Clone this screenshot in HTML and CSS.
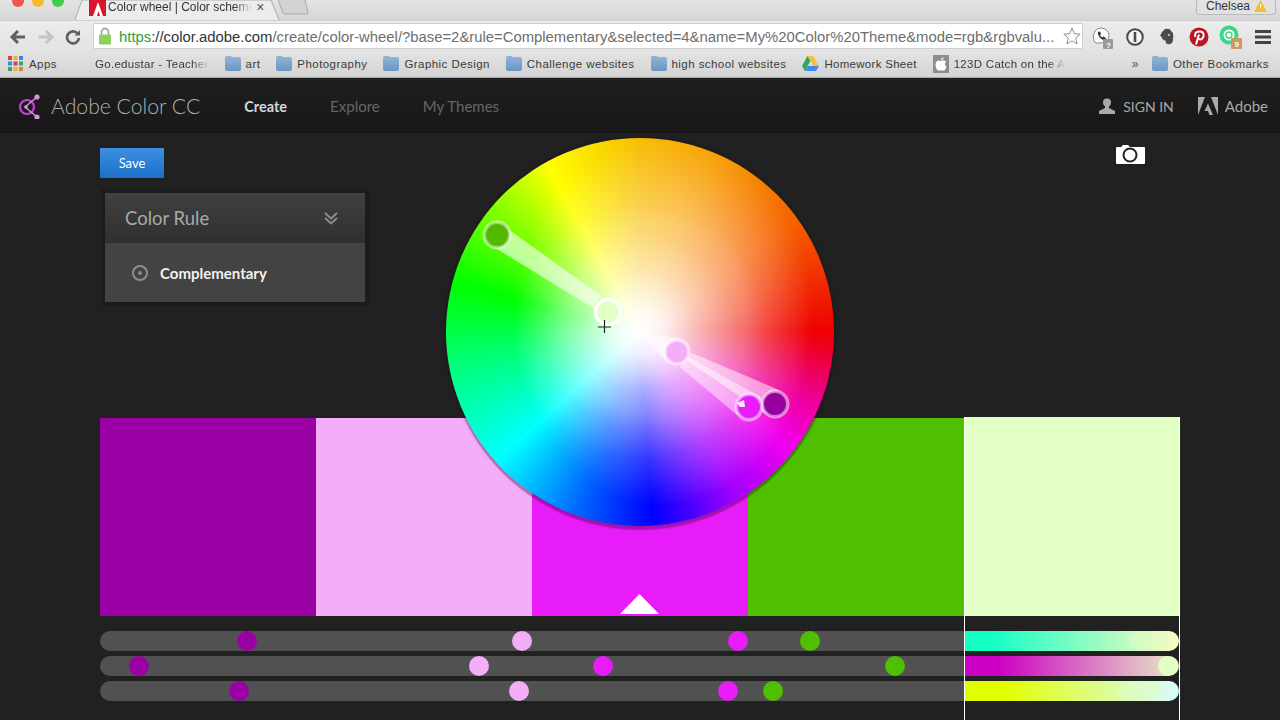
FILE: index.html
```html
<!DOCTYPE html>
<html lang="en">
<head>
<meta charset="utf-8">
<title>Color wheel | Color schemes</title>
<link rel="stylesheet" href="styles.css">
</head>
<body>
<div class="tabstrip">
  <div class="lights"><i class="light red"></i><i class="light amber"></i><i class="light green"></i></div>
  <div class="tab">
    <svg class="tab-shape" width="208" height="20" viewBox="0 0 208 20"><path d="M1 20 L8 0 H197 L205 20" fill="#ececec" stroke="#adadad"/></svg>
    <svg class="favicon" width="17" height="16" viewBox="0 0 17 16"><rect width="17" height="16" fill="#d8142a"/><path d="M4 16 L9 2 L14 16 H11 L9.500 11 L8 16Z" fill="#fff"/></svg>
    <span class="tab-title">Color wheel | Color scheme</span>
    <span class="tab-close">×</span>
  </div>
  <svg class="newtab" width="32" height="18" viewBox="0 0 32 18"><path d="M0 0 L5 13 Q5.500 14 7 14 H29 Q30.500 14 30 12 L27 0" fill="#d2d2d2" stroke="#a8a8a8"/></svg>
  <div class="user"><span>Chelsea</span><svg width="13" height="12" viewBox="0 0 13 12"><path d="M6.500 0 L13 12 H0Z" fill="#f6c02c"/><rect x="6" y="4" width="1.200" height="4" fill="#fff"/></svg></div>
</div>

<div class="toolbar">
  <svg class="tool" width="18" height="16" viewBox="0 0 18 16"><path d="M16 8 H4 M9 2 L3 8 L9 14" fill="none" stroke="#5f5f5f" stroke-width="3"/></svg>
  <svg class="tool" width="18" height="16" viewBox="0 0 18 16"><path d="M2 8 H14 M9 2 L15 8 L9 14" fill="none" stroke="#c4c4c4" stroke-width="3"/></svg>
  <svg class="tool" width="16" height="16" viewBox="0 0 16 16"><path d="M13 5 A6 6 0 1 0 14 9" fill="none" stroke="#5f5f5f" stroke-width="2.600"/><path d="M9.500 6.500 H15 V1Z" fill="#5f5f5f"/></svg>
  <div class="omnibox">
    <svg width="14" height="18" viewBox="0 0 14 18"><path d="M3.500 8 V5 A3.500 3.500 0 0 1 10.500 5 V8" fill="none" stroke="#a9a9a9" stroke-width="1.800"/><rect x="1" y="7.500" width="12" height="10" rx="1" fill="#87d35c"/></svg>
    <span class="url"><b class="scheme">https</b><span class="host">://color.adobe.com</span>/create/color-wheel/?base=2&amp;rule=Complementary&amp;selected=4&amp;name=My%20Color%20Theme&amp;mode=rgb&amp;rgbvalu...</span>
    <svg class="star" width="18" height="18" viewBox="0 0 18 18"><path d="M9 1 L11.300 6.700 L17.200 7.100 L12.700 11 L14.100 17 L9 13.800 L3.900 17 L5.300 11 L0.800 7.100 L6.700 6.700Z" fill="#fff" stroke="#8e8e8e"/></svg>
  </div>
  <div class="extensions">
    <span class="ext"><svg width="24" height="24" viewBox="0 0 24 24"><path d="M10 3 A8 7.500 0 0 1 10 18 H5 L3 16 Q1 10 4 6 Q6 3 10 3Z" fill="#fafafa" stroke="#8a8a8a"/><path d="M7 7 L9 6.500 L10 9 L9 10 Q10 12 11.500 12.500 L12.500 11.500 L15 13 L14 15 Q9 15 7 9Z" fill="#333"/><rect x="12" y="14" width="10" height="10" rx="1" fill="#9a9a9a"/><text x="15" y="22.500" class="badge-text">?</text></svg></span>
    <span class="ext"><svg width="20" height="20" viewBox="0 0 20 20"><circle cx="10" cy="10" r="7.800" fill="#f4f4f4" stroke="#4a4a4a" stroke-width="2"/><rect x="8.700" y="5" width="2.600" height="10" fill="#4a4a4a"/></svg></span>
    <span class="ext"><svg width="16" height="18" viewBox="0 0 16 18"><path d="M3 4 L6 1 Q11 0 12 3 Q15 4 14 11 Q14 17 9 16 Q6 16 7 13 Q3 12 2 8 H1Z" fill="#4b4b4b"/><circle cx="10" cy="7" r="1" fill="#ddd"/></svg></span>
    <span class="ext"><svg width="20" height="20" viewBox="0 0 20 20"><circle cx="10" cy="10" r="9.500" fill="#bb1627"/><path d="M7 17.500 L10 7.500 M6.300 10 Q5 4.500 10.500 4.500 Q15.300 4.500 14.500 9 Q13.500 13.500 9.800 12" fill="none" stroke="#fff" stroke-width="2"/></svg></span>
    <span class="ext"><svg width="26" height="26" viewBox="0 0 26 26"><circle cx="11" cy="11" r="7.500" fill="#fff" stroke="#3fd487" stroke-width="4"/><circle cx="11" cy="11" r="3" fill="#fff" stroke="#3fd487" stroke-width="1.500"/><rect x="13" y="14" width="11" height="11" rx="1" fill="#c99a63"/><text x="16.500" y="23" class="badge-text">9</text></svg></span>
    <span class="ext"><svg width="16" height="14" viewBox="0 0 16 14"><rect width="16" height="3" fill="#444"/><rect y="5.500" width="16" height="3" fill="#444"/><rect y="11" width="16" height="3" fill="#444"/></svg></span>
  </div>
</div>

<div class="bookmarks">
  <span class="bm apps"><svg width="15" height="15" viewBox="0 0 15 15"><g><rect width="4" height="4" fill="#d9453b"/><rect x="5.500" width="4" height="4" fill="#e2b33d"/><rect x="11" width="4" height="4" fill="#3f85e5"/><rect y="5.500" width="4" height="4" fill="#3f85e5"/><rect x="5.500" y="5.500" width="4" height="4" fill="#d9453b"/><rect x="11" y="5.500" width="4" height="4" fill="#3ba75b"/><rect y="11" width="4" height="4" fill="#3ba75b"/><rect x="5.500" y="11" width="4" height="4" fill="#e2b33d"/><rect x="11" y="11" width="4" height="4" fill="#d9853b"/></g></svg>Apps</span>
  <span class="bm edu"><span class="fade tight">Go.edustar - Teacher</span></span>
  <span class="bm"><i class="folder"></i>art</span>
  <span class="bm"><i class="folder"></i>Photography</span>
  <span class="bm"><i class="folder"></i>Graphic Design</span>
  <span class="bm"><i class="folder"></i>Challenge websites</span>
  <span class="bm"><i class="folder"></i>high school websites</span>
  <span class="bm"><svg width="17" height="15" viewBox="0 0 17 15"><path d="M5.500 0 H11 L17 10 H11.500Z" fill="#f4c23d"/><path d="M5.500 0 L8.300 5 L3 15 L0 10Z" fill="#2fa65a"/><path d="M3 15 L6 10 H17 L14 15Z" fill="#4585ef"/></svg><span class="tight">Homework Sheet</span></span>
  <span class="bm"><span class="apple"><svg width="12" height="14" viewBox="0 0 12 14"><path d="M8.500 0 Q8.500 3 6 3.500 Q6 1 8.500 0Z M6 4 Q8 3 10 3.800 Q11 4.500 11.200 5 Q8.500 7 11.500 10 Q10 14 8 13.700 Q6 13 4 13.700 Q1 13 0.500 8 Q0.500 3.500 4 3.500Z" fill="#fff"/></svg></span><span class="fade tight">123D Catch on the A</span></span>
  <span class="more">»</span>
  <span class="bm"><i class="folder"></i>Other Bookmarks</span>
</div>

<header class="app-header">
  <svg class="logo" width="24" height="26" viewBox="0 0 24 26"><circle cx="9" cy="14" r="7" fill="none" stroke="#c840d8" stroke-width="2.200"/><path d="M19 4 L7 14 L19 24" fill="none" stroke="#d8a0e0" stroke-width="1.300"/><circle cx="19" cy="4" r="2.600" fill="#e48cf0"/><circle cx="19" cy="24" r="2.600" fill="#e48cf0"/><circle cx="8" cy="14" r="1.800" fill="#e48cf0"/></svg>
  <span class="brand">Adobe Color CC</span>
  <nav class="nav"><a class="nav-on">Create</a><a>Explore</a><a>My Themes</a></nav>
  <div class="account">
    <svg width="16" height="16" viewBox="0 0 16 16"><circle cx="8" cy="4.500" r="4" fill="#aaa"/><path d="M6 8 H10 V10 L16 13 V16 H0 V13 L6 10Z" fill="#aaa"/></svg>
    <span class="sign">SIGN IN</span>
    <svg class="a-logo" width="20" height="18" viewBox="0 0 20 18"><path d="M0 0 H7 L0 18Z M13 0 H20 V18Z M10 6.500 L15 18 H11.500 L10 14 H6.500Z" fill="#aaa"/></svg>
    <span class="adobe">Adobe</span>
  </div>
</header>

<main class="main">
  <div class="topline">
    <button class="save">Save</button>
    <svg width="29" height="21" viewBox="0 0 29 21"><path d="M1 4 H5 L7 2 H12 L14 4 H28 Q29 4 29 5 V20 Q29 21 28 21 H1 Q0 21 0 20 V5 Q0 4 1 4Z" fill="#fff"/><circle cx="14" cy="12" r="6.500" fill="none" stroke="#222" stroke-width="2"/></svg>
  </div>

  <section class="panel">
    <div class="panel-head"><span>Color Rule</span>
      <svg width="14" height="14" viewBox="0 0 14 14"><path d="M1 2 L7 7.500 L13 2 M1 7 L7 12.500 L13 7" fill="none" stroke="#8e8e8e" stroke-width="1.800"/></svg>
    </div>
    <div class="panel-body"><i class="radio"></i><span>Complementary</span></div>
  </section>

  <div class="swatches">
    <div class="swatch s1"></div>
    <div class="swatch s2"></div>
    <div class="swatch s3"><i class="pointer"></i></div>
    <div class="swatch s4"></div>
    <div class="swatch s5"></div>
  </div>

  <div class="sliders">
    <div class="row">
      <div class="track">
        <i class="dot c1" style="left:17%"></i><i class="dot c2" style="left:48.8%"></i><i class="dot c3" style="left:73.7%"></i><i class="dot c4" style="left:82.05%"></i>
      </div>
      <div class="ramp r1"><i class="ghost" style="left:174px"></i><i class="ghost" style="left:195px"></i></div>
    </div>
    <div class="row">
      <div class="track">
        <i class="dot c1" style="left:4.5%"></i><i class="dot c2" style="left:43.85%"></i><i class="dot c3" style="left:58.1%"></i><i class="dot c4" style="left:91.85%"></i>
      </div>
      <div class="ramp r2"><i class="ghost solid" style="left:203px"></i></div>
    </div>
    <div class="row">
      <div class="track">
        <i class="dot c1" style="left:16.05%"></i><i class="dot c2" style="left:48.4%"></i><i class="dot c3" style="left:72.55%"></i><i class="dot c4" style="left:77.75%"></i>
      </div>
      <div class="ramp r3"><i class="ghost" style="left:163px"></i><i class="ghost" style="left:185px"></i></div>
    </div>
  </div>

  <div class="selected-frame"></div>

  <div class="wheel">
    <svg class="wheel-marks" width="388" height="388" viewBox="0 0 388 388">
      <path d="M51 83 L155 158 L147 170 L38 103Z" fill="#fff" fill-opacity=".6"/>
      <path d="M194 194 L235 201 L222 226Z" fill="#fff" fill-opacity=".5"/>
      <path d="M246 215 L333 252 L320 276 L240 222Z" fill="#fff" fill-opacity=".5"/>
      <path d="M240 218 L315 259 L291 277 L234 229Z" fill="#fff" fill-opacity=".45"/>
      <circle cx="51" cy="97" r="12.700" fill="#52b800" stroke="#fff" stroke-opacity=".45" stroke-width="3.500"/>
      <circle cx="329" cy="266" r="12.700" fill="#97009f" stroke="#fff" stroke-opacity=".5" stroke-width="3.500"/>
      <circle cx="303" cy="269" r="12.700" fill="#e81cf8" stroke="#fff" stroke-opacity=".5" stroke-width="3.500"/>
      <path d="M291 265 L298 262 L299 269 L294 269Z" fill="#fff" fill-opacity=".9"/>
      <circle cx="231" cy="214" r="12" fill="#f4aef9" stroke="#fff" stroke-opacity=".5" stroke-width="3.500"/>
      <circle cx="162" cy="174" r="12.500" fill="#e2ffc6" stroke="#fff" stroke-width="3.500"/>
      <path d="M158.500 182 V195 M152 189 H165" stroke="#222" stroke-width="1.200"/>
    </svg>
  </div>
</main>
</body>
</html>
```
FILE: styles.css
```css
* { box-sizing: border-box; }
html, body { margin: 0; height: 720px; overflow: hidden; }
body { width: 1280px; background: #212121; font-family: "Liberation Sans", Arial, sans-serif; color: #333; display: flex; flex-direction: column; }
i { display: block; }

.tabstrip { height: 20px; display: flex; background: linear-gradient(#e4e4e4, #d6d6d6); position: relative; overflow: hidden; flex: none; }
.lights { display: flex; gap: 8px; margin: -5px 0 0 12px; }
.light { width: 12px; height: 12px; border-radius: 50%; }
.red { background: #f2544e; }
.amber { background: #f8b82e; }
.green { background: #3fcf47; }
.tab { position: relative; margin-left: 10px; width: 204px; height: 20px; display: flex; align-items: center; padding: 0 0 6px 15px; font-size: 12px; flex: none; }
.tab-shape { position: absolute; left: 0; top: 0; }
.favicon, .tab-title, .tab-close { position: relative; }
.favicon { margin-top: 2px; }
.tab-title { margin-left: 2px; white-space: nowrap; color: #333; -webkit-mask-image: linear-gradient(90deg, #000 86%, transparent 98%); mask-image: linear-gradient(90deg, #000 86%, transparent 98%); }
.tab-close { margin-left: 1px; font-size: 14px; color: #555; line-height: 16px; }
.newtab { flex: none; }
.user { margin-left: auto; margin-right: 4px; width: 80px; height: 15px; border: 1px solid #bbb; border-top: 0; border-radius: 0 0 4px 4px; display: flex; align-items: center; justify-content: flex-end; gap: 4px; padding: 0 8px 3px 0; font-size: 12px; background: #e2e2e2; line-height: 12px; }

.toolbar { height: 33px; display: flex; align-items: center; background: linear-gradient(#ececec, #e2e2e2); border-top: 1px solid #cfcfcf; padding: 0 0 2px 9px; flex: none; }
.tool { margin: 2px 10px 0 0; flex: none; }
.omnibox { margin-left: 2px; width: 990px; height: 26px; background: #fff; border: 1px solid #cfcfcf; border-radius: 2px; display: flex; align-items: center; padding-left: 4px; flex: none; }
.url { margin-left: 7px; padding-top: 1px; font-size: 14.850px; color: #6e6e6e; white-space: nowrap; width: 945px; overflow: hidden; }
.scheme { font-weight: 400; color: #2f9e44; }
.host { color: #333; }
.star { margin-left: -1px; flex: none; }
.extensions { display: flex; align-items: center; flex: 1; padding: 2px 0 0 4px; }
.ext { width: 32px; display: flex; justify-content: center; align-items: center; height: 26px; }
.badge-text { font: 700 8px "Liberation Sans", sans-serif; fill: #fff; }

.bookmarks { height: 25px; display: flex; align-items: center; gap: 16px; background: linear-gradient(#e2e2e2, #d4d4d4); border-bottom: 1px solid #a8a8a8; padding: 0 11px 3px 8px; font-size: 11.500px; letter-spacing: .44px; color: #3a3a3a; flex: none; }
.bm { display: flex; align-items: center; gap: 5px; white-space: nowrap; }
.apps { gap: 6px; }
.edu { margin-left: 22px; }
.tight { letter-spacing: .29px; }
.fade { display: block; white-space: nowrap; -webkit-mask-image: linear-gradient(90deg, #000 85%, transparent); mask-image: linear-gradient(90deg, #000 85%, transparent); }
.folder { position: relative; width: 16px; height: 14px; border-radius: 2px; background: linear-gradient(#8fb4d8, #6c95c2); }
.folder::before { content: ""; position: absolute; left: 0; top: -1px; width: 7px; height: 3px; border-radius: 2px 2px 0 0; background: #8db0d4; }
.apple { width: 16px; height: 18px; background: #8d8d8d; display: flex; align-items: center; justify-content: center; }
.more { margin-left: auto; margin-right: -3px; color: #555; font-size: 12px; }

.app-header { height: 55px; display: flex; align-items: center; background: linear-gradient(#1f1f1f, #171717); padding: 0 12px 0 18px; font-family: Lato, "Open Sans", sans-serif; flex: none; }
.logo { flex: none; }
.brand { margin-left: 9px; font-size: 21.200px; font-weight: 300; color: #b0b0b0; white-space: nowrap; }
.nav { display: flex; align-items: center; gap: 43px; margin-left: 44px; padding-top: 1px; font-size: 15px; color: #666; }
.nav-on { color: #d6d6d6; font-weight: 700; font-size: 14.500px; }
.account { margin-left: auto; padding-top: 1px; display: flex; align-items: center; font-size: 15px; color: #a8a8a8; }
.sign { margin-left: 8px; font-size: 14px; }
.a-logo { margin-left: 24px; }
.adobe { margin-left: 7px; }

.main { position: relative; flex: 1; padding: 0 100px; min-height: 0; }
.topline { display: flex; justify-content: space-between; align-items: flex-start; padding: 10px 35px 0 0; }
.save { margin-top: 5px; width: 64px; height: 30px; border: 0; padding: 0; background: linear-gradient(#3c8fe2, #1c6fca); color: #fff; font: 400 13px Lato, sans-serif; }
.panel { margin: 15px 0 0 5px; width: 260px; box-shadow: 0 0 0 4px #1c1c1c; }
.panel-head { height: 50px; display: flex; align-items: center; justify-content: space-between; padding: 0 27px 0 20px; background: linear-gradient(#414141, #2f2f2f); font: 400 18.500px Lato, sans-serif; color: #a9a9a9; }
.panel-body { height: 59px; display: flex; align-items: center; padding-left: 27px; gap: 12px; background: #434343; font: 700 15px Lato, sans-serif; color: #f2f2f2; }
.radio { position: relative; width: 16px; height: 16px; border-radius: 50%; border: 2px solid #8d8d8d; }
.radio::after { content: ""; position: absolute; left: 4px; top: 4px; width: 4px; height: 4px; border-radius: 50%; background: #8d8d8d; }

.swatches { display: flex; margin-top: 116px; height: 198px; align-items: flex-end; }
.swatch { position: relative; flex: 1; height: 198px; }
.s1 { background: #9a00a3; }
.s2 { background: #f4aef9; }
.s3 { background: #e81cf8; }
.s4 { background: #4ec000; }
.s5 { background: #e2ffc6; height: 199px; }
.pointer { position: absolute; left: 88px; bottom: 2px; width: 39px; height: 20px; background: #fff; clip-path: polygon(50% 0, 100% 100%, 0 100%); }

.sliders { display: flex; flex-direction: column; gap: 5px; margin-top: 15px; }
.row { display: flex; height: 20px; }
.track { position: relative; width: 865px; background: #515151; border-radius: 10px 0 0 10px; }
.dot { position: absolute; top: 0; width: 20px; height: 20px; margin-left: -10px; border-radius: 50%; }
.c1 { background: #9a00a3; }
.c2 { background: #f4aef9; }
.c3 { background: #e81cf8; }
.c4 { background: #4ec000; }
.ramp { position: relative; flex: 1; margin-right: 1px; border-radius: 0 10px 10px 0; overflow: hidden; }
.r1 { background: linear-gradient(90deg, #14ffc4, #14ffc4 12%, #fff9c2); }
.r2 { background: linear-gradient(90deg, #cc00c4, #cc00c4 15%, #e8ecc4); }
.r3 { background: linear-gradient(90deg, #e2ff00, #e2ff00 18%, #d8faff); }
.ghost { position: absolute; top: 0; width: 20px; height: 20px; margin-left: -10px; border-radius: 50%; background: #e2ffc6; opacity: .4; }
.solid { opacity: 1; }
.selected-frame { position: absolute; left: 964px; top: 284px; bottom: 0; width: 216px; border: solid #fff; border-width: 0 1px; }

.wheel { position: absolute; left: 446px; top: 5px; width: 388px; height: 388px; border-radius: 50%; box-shadow: 0 4px 1px rgba(60, 0, 60, .3), 0 0 5px rgba(0, 0, 0, .3);
  background:
    radial-gradient(circle closest-side, #fff 0, rgba(255,255,255,.85) 12%, rgba(255,255,255,.4) 30%, rgba(255,255,255,.1) 50%, rgba(255,255,255,0) 65%),
    radial-gradient(ellipse 150px 185px at 56% 47%, rgba(255,255,255,.6) 0, rgba(255,255,255,.38) 55%, rgba(255,255,255,0) 100%),
    conic-gradient(#f8bc00 0deg, #f89a00 25deg, #f56000 55deg, #ee0000 90deg, #ee0090 110deg, #f000f0 128deg, #a000ff 150deg, #0000ff 176deg, #0060ff 198deg, #00ffff 228deg, #00ff70 262deg, #00ff00 285deg, #a0ff00 316deg, #ffff00 331deg, #f8bc00 360deg); }
.wheel-marks { display: block; }
```
